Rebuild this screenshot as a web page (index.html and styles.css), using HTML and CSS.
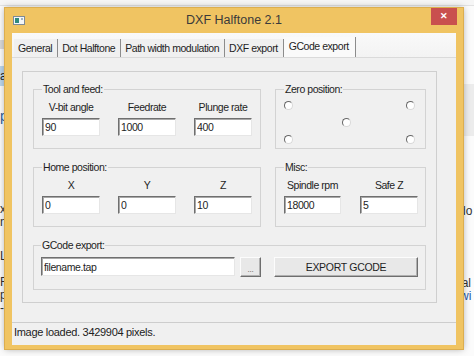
FILE: index.html
```html
<!DOCTYPE html>
<html lang="en">
<head>
    <meta charset="UTF-8">
    <meta name="viewport" content="width=device-width, initial-scale=1.0">
    <title>DXF Halftone 2.1</title>
    <link rel="stylesheet" href="styles.css">
</head>
<body>
    <div class="desktop">
        <!-- bits of the window behind -->
        <div class="bg bg-top"></div>
        <div class="bg bg-left-band"></div>
        <div class="bg bg-left-blue"><span>a</span></div>
        <div class="bg bg-right-block"></div>
        <span class="bg bg-text left-p">p</span>
        <span class="bg bg-text left-x">x<br>n</span>
        <span class="bg bg-text left-fe">L<br><br>F<br>p<br>-</span>
        <span class="bg bg-text right-do">do</span>
        <span class="bg bg-text right-nal">nal<br><b>wi</b></span>

        <div class="window">
            <div class="titlebar">
                <svg class="app-icon" width="12" height="9" viewBox="0 0 12 9">
                    <rect x="0.5" y="0.5" width="11" height="8" fill="#f4f6f8" stroke="#7d8a96"/>
                    <rect x="2" y="2" width="4" height="5" fill="#2f8a7e"/>
                    <rect x="8" y="2" width="2" height="2" fill="#9fb4c0"/>
                </svg>
                <span class="title">DXF Halftone 2.1</span>
                <span class="close">&#x2715;</span>
            </div>

            <div class="client">
                <div class="tabs">
                    <span class="tab">General</span>
                    <span class="tab">Dot Halftone</span>
                    <span class="tab">Path width modulation</span>
                    <span class="tab">DXF export</span>
                    <span class="tab active">GCode export</span>
                </div>

                <div class="page">
                    <div class="panel">
                        <fieldset class="group">
                            <legend>Tool and feed:</legend>
                            <div class="fields three">
                                <label>V-bit angle</label>
                                <label>Feedrate</label>
                                <label>Plunge rate</label>
                                <input type="text" value="90">
                                <input type="text" value="1000">
                                <input type="text" value="400">
                            </div>
                        </fieldset>

                        <fieldset class="group">
                            <legend>Zero position:</legend>
                            <div class="radios">
                                <span class="radio r1"></span>
                                <span class="radio r2"></span>
                                <span class="radio r3"></span>
                                <span class="radio r4"></span>
                                <span class="radio r5"></span>
                            </div>
                        </fieldset>

                        <fieldset class="group">
                            <legend>Home position:</legend>
                            <div class="fields three">
                                <label>X</label>
                                <label>Y</label>
                                <label>Z</label>
                                <input type="text" value="0">
                                <input type="text" value="0">
                                <input type="text" value="10">
                            </div>
                        </fieldset>

                        <fieldset class="group">
                            <legend>Misc:</legend>
                            <div class="fields two">
                                <label>Spindle rpm</label>
                                <label>Safe Z</label>
                                <input type="text" value="18000">
                                <input type="text" value="5">
                            </div>
                        </fieldset>

                        <fieldset class="group export">
                            <legend>GCode export:</legend>
                            <div class="export-row">
                                <input type="text" class="filename" value="filename.tap">
                                <button class="btn browse">...</button>
                                <button class="btn export-btn">EXPORT GCODE</button>
                            </div>
                        </fieldset>
                    </div>
                </div>

                <div class="status">Image loaded. 3429904 pixels.</div>
            </div>
        </div>
    </div>
</body>
</html>
```

FILE: styles.css
```css
body {
    margin: 0;
    font-family: "Liberation Sans", Arial, sans-serif;
    color: #1e1e1e;
}

.desktop {
    position: relative;
    width: 474px;
    height: 356px;
    overflow: hidden;
    background: #fbfbfb;
}

/* background window fragments */
.bg {
    position: absolute;
}

.bg-top {
    left: 0;
    top: 0;
    width: 474px;
    height: 5px;
    border-bottom: 1px solid #e2e2e2;
    background: #f6f6f6;
}

.bg-left-band {
    left: 0;
    top: 40px;
    width: 6px;
    height: 9px;
    background: #d9d9d9;
}

.bg-left-blue {
    left: 0;
    top: 66px;
    width: 6px;
    height: 20px;
    background: #bcd6ec;
    font-size: 12px;
    line-height: 20px;
}

.bg-left-blue span {
    margin-left: 0;
}

.bg-right-block {
    left: 462px;
    top: 84px;
    width: 12px;
    height: 52px;
    background: #ececec;
}

.bg-text {
    font-size: 12px;
    line-height: 13px;
    color: #333;
}

.left-p {
    left: 0;
    top: 110px;
    color: #2d5f9e;
    font-size: 14px;
}

.left-x {
    left: 0;
    top: 203px;
}

.left-fe {
    left: 0;
    top: 250px;
}

.right-do {
    left: 459px;
    top: 205px;
}

.right-nal {
    left: 455px;
    top: 277px;
}

.right-nal b {
    font-weight: normal;
    color: #2a5aa8;
    margin-left: 5px;
}

/* window */
.window {
    position: absolute;
    left: 5px;
    top: 8px;
    width: 458px;
    height: 341px;
    display: flex;
    flex-direction: column;
    background: #f0c462;
    box-shadow: 0 0 7px rgba(0, 0, 0, 0.35);
    outline: 1px solid #dcae4f;
}

.titlebar {
    height: 25px;
    display: grid;
    grid-template-columns: 1fr auto 1fr;
    align-items: start;
}

.app-icon {
    margin: 8px 0 0 8px;
}

.title {
    padding-top: 5px;
    font-size: 12.5px;
    line-height: 15px;
    color: #3a3a3a;
}

.close {
    justify-self: end;
    width: 26px;
    height: 17px;
    margin-right: 6px;
    background: #c9504e;
    color: #fff;
    font-size: 9px;
    line-height: 17px;
    text-align: center;
    font-weight: bold;
}

.client {
    flex: 1;
    margin: 0 7px 4px 7px;
    display: flex;
    flex-direction: column;
    background: #f0f0f0;
    font-size: 10px;
    letter-spacing: -0.45px;
}

/* tabs */
.tabs {
    height: 24px;
    display: flex;
    align-items: flex-end;
    padding-left: 2px;
    background: linear-gradient(#f9f9f9, #f3f3f3);
}

.tab {
    height: 18px;
    line-height: 18px;
    padding: 0 5px 0 4px;
    border-right: 1px solid #8c8c8c;
    box-sizing: border-box;
    background: #f0f0f0;
    font-size: 10.5px;
}

.tab.active {
    height: 20px;
    line-height: 19px;
    padding: 0 6px 0 5px;
    background: #fafafa;
}

.page {
    flex: 1;
    border-top: 1px solid #dadada;
    padding: 13px 13px 0 10px;
}

.panel {
    display: grid;
    grid-template-columns: 228px 151px;
    column-gap: 14px;
    row-gap: 12px;
    padding: 11px 10px 12px 10px;
    border: 1px solid #cfcfcf;
    width: fit-content;
}

.group {
    margin: 0;
    padding: 6px 7px 0 8px;
    min-width: 0;
    height: 66px;
    box-sizing: border-box;
    border: 1px solid #d3d3d3;
}

.group legend {
    padding: 0 1px;
    line-height: 12px;
    font-size: 10.5px;
}

.group.export {
    grid-column: 1 / 3;
    height: 51px;
    padding-top: 6px;
    padding-left: 7px;
}

.fields {
    display: grid;
    row-gap: 5px;
}

.fields.three {
    grid-template-columns: repeat(3, 58px);
    column-gap: 18px;
}

.fields.two {
    grid-template-columns: 57px 58px;
    column-gap: 19px;
}

.fields label {
    text-align: center;
    line-height: 12px;
    font-size: 10.5px;
}

input {
    height: 18px;
    width: 100%;
    box-sizing: border-box;
    margin: 0;
    padding: 0 2px 0 2px;
    border: 1px solid;
    border-color: #6f6f6f #e6e6e6 #e6e6e6 #6f6f6f;
    box-shadow: inset 1px 1px 0 #a8a8a8;
    background: #fff;
    font-family: "Liberation Sans", Arial, sans-serif;
    font-size: 10.5px;
    letter-spacing: -0.4px;
    color: #1e1e1e;
    outline: none;
}

/* zero position radios */
.radios {
    display: grid;
    grid-template-columns: 9px 49px 9px 55px 9px;
    grid-template-rows: repeat(3, 9px);
    row-gap: 8px;
}

.radio {
    width: 9px;
    height: 9px;
    box-sizing: border-box;
    border-radius: 50%;
    border: 1px solid;
    border-color: #666 #d8d8d8 #d8d8d8 #666;
    background: #fff;
}

.r1 { grid-column: 1; grid-row: 1; }
.r2 { grid-column: 5; grid-row: 1; }
.r3 { grid-column: 3; grid-row: 2; }
.r4 { grid-column: 1; grid-row: 3; }
.r5 { grid-column: 5; grid-row: 3; }

/* export row */
.export-row {
    display: flex;
    align-items: flex-start;
}

.filename {
    width: 194px;
    height: 19px;
}

.btn {
    height: 20px;
    box-sizing: border-box;
    padding: 0;
    border: 1px solid;
    border-color: #fcfcfc #6e6e6e #6e6e6e #fcfcfc;
    box-shadow: inset -1px -1px 0 #b0b0b0;
    background: #e8e8e8;
    font-family: "Liberation Sans", Arial, sans-serif;
    font-size: 10.5px;
    letter-spacing: -0.3px;
    color: #1e1e1e;
}

.browse {
    width: 21px;
    margin-left: 5px;
    font-size: 8px;
    padding-top: 4px;
    color: #555;
}

.export-btn {
    width: 144px;
    margin-left: 13px;
}

.status {
    height: 23px;
    box-sizing: border-box;
    border-top: 1px solid #cdcdcd;
    padding: 3px 0 0 2px;
    line-height: 13px;
    font-size: 11px;
    letter-spacing: -0.3px;
    color: #222;
}
```
